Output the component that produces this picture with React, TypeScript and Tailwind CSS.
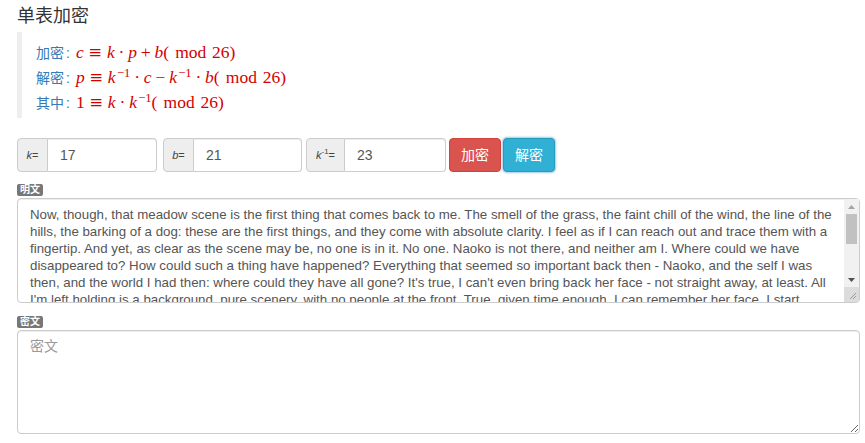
import React from 'react';

const PLAIN =
  "Now, though, that meadow scene is the first thing that comes back to me. The smell of the grass, the faint chill of the wind, the line of the hills, the barking of a dog: these are the first things, and they come with absolute clarity. I feel as if I can reach out and trace them with a fingertip. And yet, as clear as the scene may be, no one is in it. No one. Naoko is not there, and neither am I. Where could we have disappeared to? How could such a thing have happened? Everything that seemed so important back then - Naoko, and the self I was then, and the world I had then: where could they have all gone? It's true, I can't even bring back her face - not straight away, at least. All I'm left holding is a background, pure scenery, with no people at the front. True, given time enough, I can remember her face. I start joining images - her tiny, cold hand; her straight, black hair so smooth and cool to the touch; a soft, rounded earlobe and the microscopic mole just beneath it; the camel-hair coat she wore in the winter; her habit of looking straight into my eyes when asking a question; the slight trembling that would come to her voice now and then (as though she were speaking on a windy hilltop) - and slowly, almost imperceptibly, her face starts to take shape.";

const sans = "font-['Liberation_Sans','Noto_Sans_CJK_SC',sans-serif]";

const V = ({ children }: { children: React.ReactNode }) => <i className="italic">{children}</i>;
const Rel = ({ children }: { children: React.ReactNode }) => (
  <span className="mx-[0.28em] font-['DejaVu_Serif',serif] text-[0.95em]">{children}</span>
);
const Op = ({ children }: { children: React.ReactNode }) => <span className="mx-[0.22em]">{children}</span>;
const Inv = () => <sup className="text-[0.72em] relative -top-[0.5em] ml-[0.1em]">−1</sup>;
const Mod = () => (
  <span>
    (<span className="ml-[0.35em] mr-[0.33em]">mod</span>26)
  </span>
);

const Formula = ({ label, children }: { label: string; children: React.ReactNode }) => (
  <div className="flex items-baseline h-[25px]">
    <span className={`${sans} text-[14px] text-[#337ab7]`}>
      {label}
      <span className="ml-[2px]">:</span>
    </span>
    <span className="font-['Liberation_Serif',serif] text-[17.5px] text-[#d40000] ml-[6px] whitespace-nowrap">
      {children}
    </span>
  </div>
);

const Addon = ({ children, w }: { children: React.ReactNode; w: string }) => (
  <span
    className={`${w} flex items-center justify-center bg-[#eeeeee] border border-[#cccccc] rounded-l-[4px] text-[11px] text-[#444] font-['Liberation_Sans',sans-serif]`}
  >
    {children}
  </span>
);

const Group = ({ addon, aw, value, w }: { addon: React.ReactNode; aw: string; value: string; w: string }) => (
  <div className={`flex h-[34px] ${w}`}>
    <Addon w={aw}>{addon}</Addon>
    <input
      readOnly
      value={value}
      className={`flex-1 min-w-0 border border-l-0 border-[#cccccc] rounded-r-[4px] px-3 text-[14px] text-[#555] bg-white shadow-[inset_0_1px_1px_rgba(0,0,0,0.075)] outline-none ${sans}`}
    />
  </div>
);

const Badge = ({ children }: { children: React.ReactNode }) => (
  <span className={`inline-block bg-[#777777] text-white text-[10px] font-bold leading-none px-[3px] pt-[1px] pb-[1px] rounded-[2px] ${sans}`}>
    {children}
  </span>
);

const Grip = () => (
  <svg width="9" height="9" viewBox="0 0 9 9" className="absolute right-[2px] bottom-[2px]">
    <path d="M8 2 L2 8 M8 5 L5 8" stroke="#999" strokeWidth="1" />
  </svg>
);

// fake classic scrollbar drawn over the textarea
const ScrollBar = () => (
  <div className="absolute right-[1px] top-[1px] bottom-[1px] w-[15px] bg-[#f1f1f1] flex flex-col">
    <div className="h-[15px] flex items-center justify-center">
      <svg width="7" height="4" viewBox="0 0 7 4">
        <path d="M0 4 L3.5 0 L7 4 Z" fill="#a3a3a3" />
      </svg>
    </div>
    <div className="h-[30px] mx-[2px] bg-[#c1c1c1]" />
    <div className="flex-1" />
    <div className="h-[15px] flex items-center justify-center">
      <svg width="7" height="4" viewBox="0 0 7 4">
        <path d="M0 0 L7 0 L3.5 4 Z" fill="#505050" />
      </svg>
    </div>
    <div className="h-[15px] relative bg-[#dcdcdc]">
      <Grip />
    </div>
  </div>
);

export default function App() {
  return (
    <div className={`bg-white w-[865px] h-[443px] pl-[17px] pr-[5px] ${sans} text-[#333]`}>
      <h4 className="text-[18px] leading-[20px] pt-[6px] font-normal">单表加密</h4>
      <blockquote className="mt-[6px] border-l-[5px] border-[#eeeeee] pl-[14px] pt-[7px] pb-[4px]">
        <Formula label="加密">
          <V>c</V>
          <Rel>≡</Rel>
          <V>k</V>
          <Op>·</Op>
          <V>p</V>
          <Op>+</Op>
          <V>b</V>
          <Mod />
        </Formula>
        <Formula label="解密">
          <V>p</V>
          <Rel>≡</Rel>
          <V>k</V>
          <Inv />
          <Op>·</Op>
          <V>c</V>
          <Op>−</Op>
          <V>k</V>
          <Inv />
          <Op>·</Op>
          <V>b</V>
          <Mod />
        </Formula>
        <Formula label="其中">
          <span>1</span>
          <Rel>≡</Rel>
          <V>k</V>
          <Op>·</Op>
          <V>k</V>
          <Inv />
          <Mod />
        </Formula>
      </blockquote>

      <div className="flex items-center mt-[20px] h-[34px]">
        <Group
          w="w-[140px]"
          aw="w-[31px]"
          value="17"
          addon={
            <span>
              <i>k</i>=
            </span>
          }
        />
        <div className="w-[6px]" />
        <Group
          w="w-[139px]"
          aw="w-[31px]"
          value="21"
          addon={
            <span>
              <i>b</i>=
            </span>
          }
        />
        <div className="w-[4px]" />
        <Group
          w="w-[140px]"
          aw="w-[39px]"
          value="23"
          addon={
            <span>
              <i>k</i>
              <sup className="text-[8px] -top-[0.6em]">-1</sup>=
            </span>
          }
        />
        <button className="ml-[3px] w-[52px] h-[34px] bg-[#d9534f] border border-[#d43f3a] rounded-[4px] text-white text-[14px]">
          加密
        </button>
        <button className="ml-[2px] w-[52px] h-[34px] bg-[#31b0d5] border border-[#269abc] rounded-[4px] text-white text-[14px] shadow-[0_0_2px_1px_rgba(40,140,190,0.45)]">
          解密
        </button>
      </div>

      <div className="mt-[12px] h-[14px] flex items-start">
        <Badge>明文</Badge>
      </div>
      <div className="relative w-[843px] h-[105px]">
        <textarea
          readOnly
          value={PLAIN}
          className={`block w-full h-full overflow-hidden border border-[#cccccc] rounded-[4px] pl-3 pr-[24px] pt-[7px] pb-[6px] text-[13.3px] leading-[17px] text-[#555] resize-none shadow-[inset_0_1px_1px_rgba(0,0,0,0.075)] outline-none ${sans}`}
        />
        <ScrollBar />
      </div>

      <div className="mt-[13px] h-[14px] flex items-start">
        <Badge>密文</Badge>
      </div>
      <textarea
        placeholder="密文"
        className={`block w-[843px] h-[104px] border border-[#cccccc] rounded-[4px] px-3 pt-[7px] pb-[6px] text-[14px] leading-[17px] text-[#555] placeholder:text-[#999] resize-y shadow-[inset_0_1px_1px_rgba(0,0,0,0.075)] outline-none ${sans}`}
      />
    </div>
  );
}
